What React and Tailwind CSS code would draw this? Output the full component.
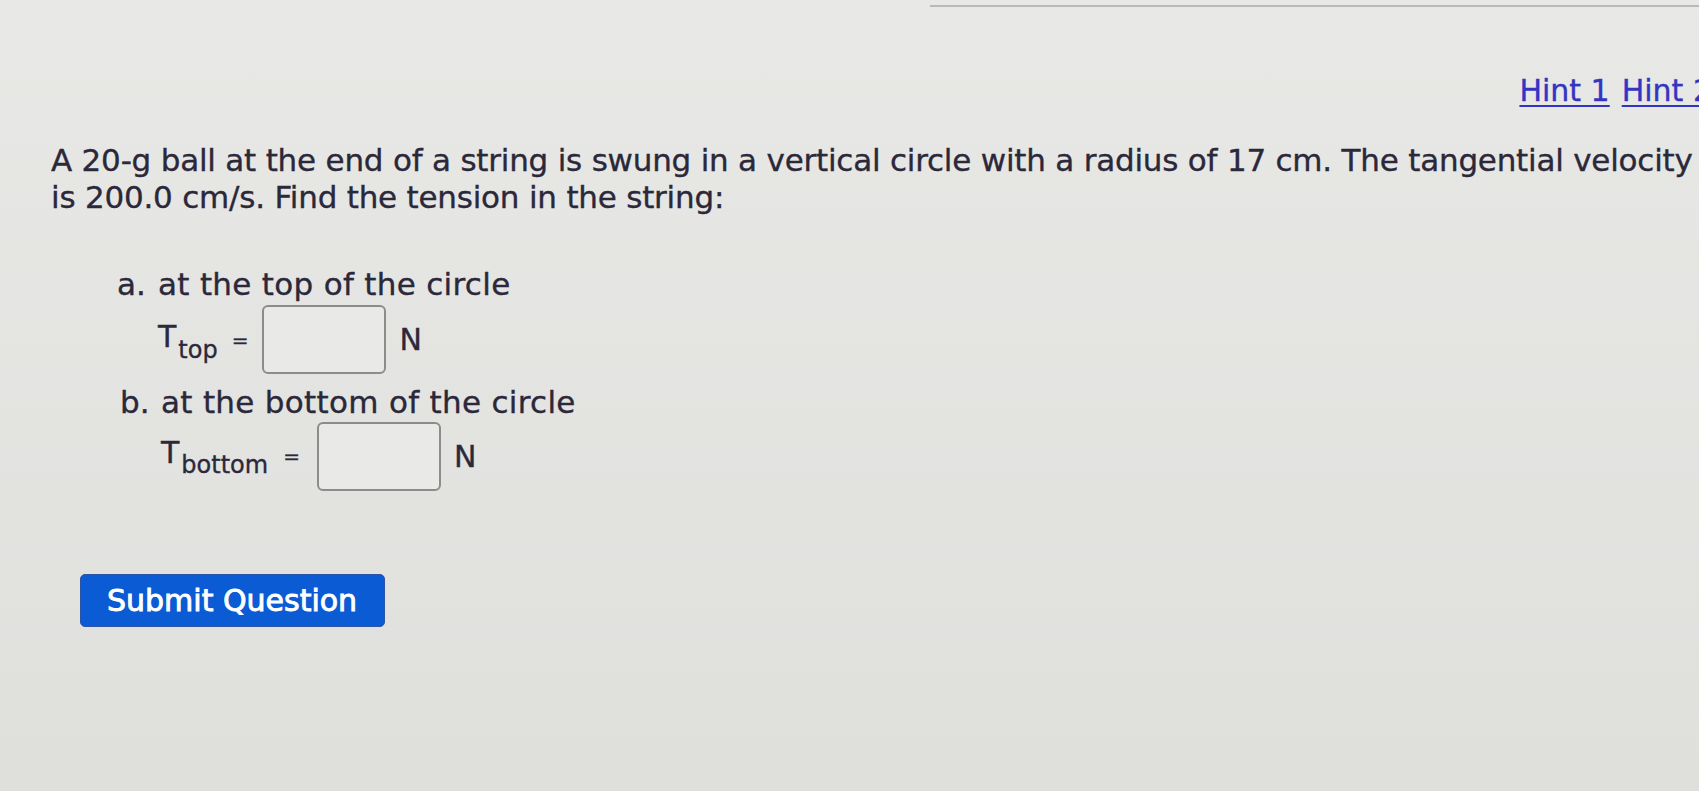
export default function App() {
  const font = { fontFamily: '"DejaVu Sans", Verdana, sans-serif' };
  return (
    <div
      className="w-[1699px] h-[791px] overflow-hidden bg-linear-to-b from-[#e8e8e6] to-[#dfdfdc] text-[#2b283a] [-webkit-text-stroke:0.35px_#2b283a]"
      style={font}
    >
      <div className="ml-[930px] mt-[5px] h-0 border-t-2 border-[#b9b9b7]"></div>
      <div className="w-[1712px] pl-[51px]">
        <div className="mt-[66px] flex justify-end gap-[12px] text-[30px] leading-[36px] whitespace-nowrap [-webkit-text-stroke:0.35px_#3434c2]">
          <a className="text-[#3434c2] underline decoration-2 underline-offset-[4px]">Hint 1</a>
          <a className="text-[#3434c2] underline decoration-2 underline-offset-[4px]">Hint 2</a>
        </div>
        <p className="mt-[33px] text-[31px] leading-[37px] whitespace-nowrap tracking-[-0.22px]">
          A 20-g ball at the end of a string is swung in a vertical circle with a radius of 17 cm. The tangential velocity
          <br />
          is 200.0 cm/s. Find the tension in the string:
        </p>
        <div className="mt-[50px] ml-[66px] text-[31px] leading-[37px]">
          <div className="flex">
            <span className="w-[41px]">a.</span>
            <div className="flex flex-col">
              <span className="tracking-[0.3px]">at the top of the circle</span>
              <div className="mt-[2px] flex items-start">
                <span className="mt-[14px] text-[30px] leading-[36px] whitespace-nowrap">
                  T<span className="ml-[2px] text-[24px] align-[-11px]">top</span>
                  <span className="ml-[14px] text-[20px]">=</span>
                </span>
                <div className="ml-[14px] w-[124px] h-[69px] rounded-[6px] border-2 border-[#8c8c8c] bg-[#e9e9e7]"></div>
                <span className="ml-[13px] mt-[17px] text-[30px] leading-[36px]">N</span>
              </div>
            </div>
          </div>
          <div className="mt-[10px] flex">
            <span className="w-[41px] ml-[3px]">b.</span>
            <div className="flex flex-col">
              <span className="tracking-[0.3px]">at the bottom of the circle</span>
              <div className="mt-[1px] flex items-start">
                <span className="mt-[13px] text-[30px] leading-[36px] whitespace-nowrap">
                  T<span className="ml-[2px] text-[24px] align-[-10px]">bottom</span>
                  <span className="ml-[15px] text-[20px]">=</span>
                </span>
                <div className="ml-[17px] w-[124px] h-[69px] rounded-[6px] border-2 border-[#8c8c8c] bg-[#e9e9e7]"></div>
                <span className="ml-[13px] mt-[17px] text-[30px] leading-[36px]">N</span>
              </div>
            </div>
          </div>
        </div>
        <button className="mt-[83px] ml-[29px] w-[305px] h-[53px] rounded-[5px] border border-[#2c55a8] bg-[#0b5bd4] text-white text-[30px] leading-[36px] text-left pl-[26px] [-webkit-text-stroke:0.9px_white]">
          Submit Question
        </button>
      </div>
    </div>
  );
}
